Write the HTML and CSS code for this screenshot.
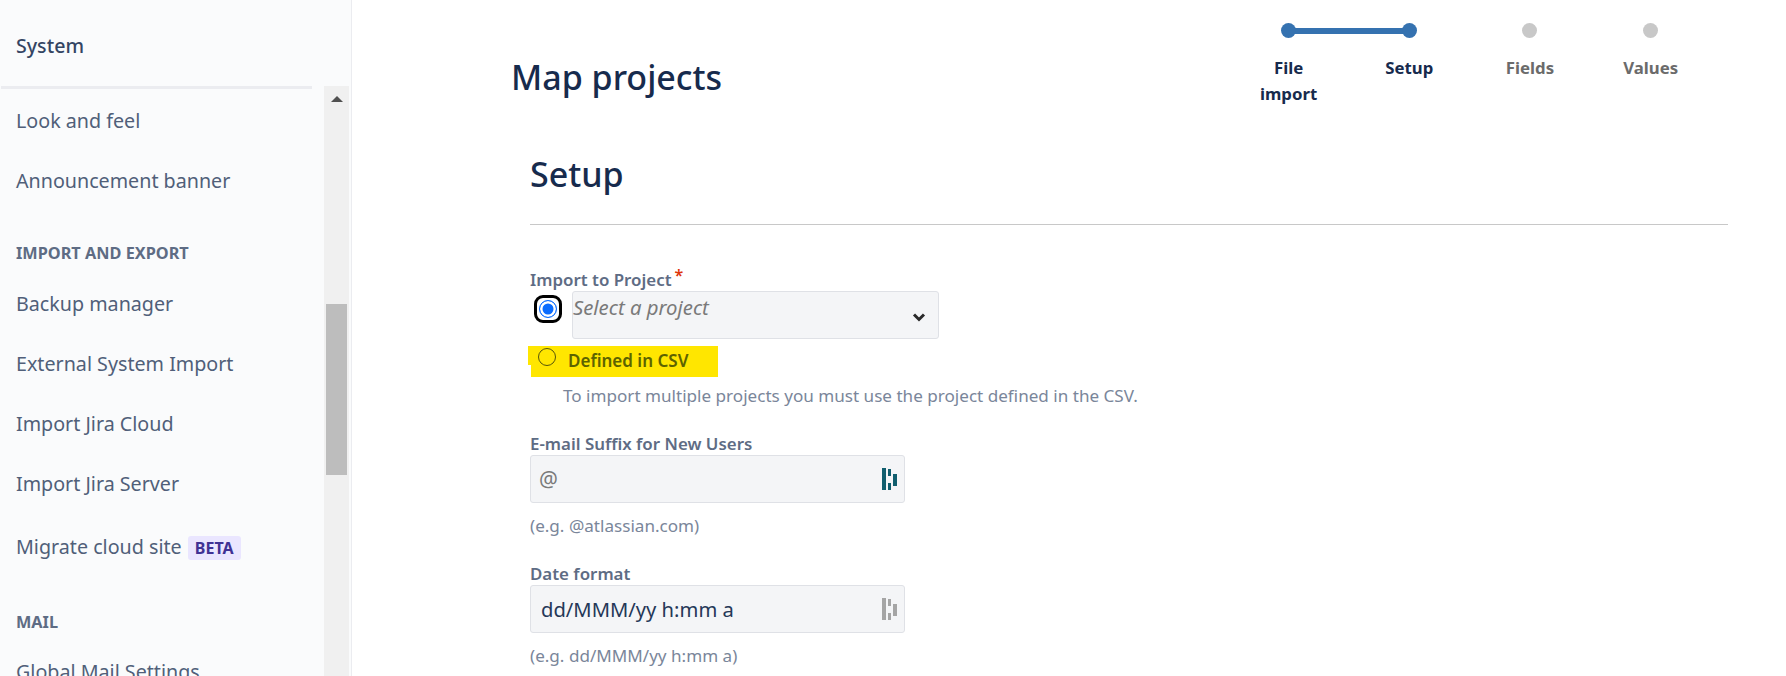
FILE: index.html
```html
<!DOCTYPE html>
<html lang="en">
<head>
<meta charset="utf-8">
<title>Map projects</title>
<link rel="stylesheet" href="styles.css">
</head>
<body>
<div class="app">
  <aside class="sidebar">
    <div class="side-title">System</div>
    <div class="side-body">
      <div class="nav-col">
        <div class="side-rule"></div>
        <nav class="nav">
          <a class="nav-item first">Look and feel</a>
          <a class="nav-item">Announcement banner</a>
          <div class="nav-head">IMPORT AND EXPORT</div>
          <a class="nav-item">Backup manager</a>
          <a class="nav-item">External System Import</a>
          <a class="nav-item">Import Jira Cloud</a>
          <a class="nav-item">Import Jira Server</a>
          <a class="nav-item beta-row">Migrate cloud site <span class="beta">BETA</span></a>
          <div class="nav-head mail">MAIL</div>
          <a class="nav-item">Global Mail Settings</a>
        </nav>
      </div>
      <div class="scrollbar">
        <div class="arrow"></div>
        <div class="thumb"></div>
      </div>
    </div>
  </aside>
  <main class="main">
    <header class="top">
      <h1 class="title">Map projects</h1>
      <ol class="steps">
        <li class="step done first-step"><span class="dot"></span><span class="step-label">File import</span></li>
        <li class="step done"><span class="dot"></span><span class="step-label">Setup</span></li>
        <li class="step"><span class="dot"></span><span class="step-label">Fields</span></li>
        <li class="step"><span class="dot"></span><span class="step-label">Values</span></li>
      </ol>
    </header>
    <section class="form">
      <h2 class="section">Setup</h2>
      <label class="label project-label">Import to Project<span class="star">*</span></label>
      <div class="project-row">
        <span class="radio-focus"><span class="radio-on"></span></span>
        <div class="select">
          <span class="placeholder">Select a project</span>
          <svg class="chev" viewBox="0 0 14 10" width="14" height="10"><path d="M2 2.500 L7 7.500 L12 2.500" fill="none" stroke="#2A2A2A" stroke-width="3"/></svg>
        </div>
      </div>
      <div class="csv-row">
        <span class="radio-off"></span>
        <span class="csv-text">Defined in CSV</span>
      </div>
      <p class="hint indent">To import multiple projects you must use the project defined in the CSV.</p>
      <label class="label email-label">E-mail Suffix for New Users</label>
      <div class="input">
        <span class="at">@</span>
        <svg class="dash" viewBox="0 0 16 22" width="16" height="22"><path fill="#115E6E" d="M0 0h4v22H0zM6 1h3v7H6zM6 15h3v7H6zM11 6h4v12h-4z"/></svg>
      </div>
      <p class="hint eg">(e.g. @atlassian.com)</p>
      <label class="label date-label">Date format</label>
      <div class="input">
        <span class="value">dd/MMM/yy h:mm a</span>
        <svg class="dash" viewBox="0 0 16 22" width="16" height="22"><path fill="#A5A5A5" d="M0 0h4v22H0zM6 1h3v7H6zM6 15h3v7H6zM11 6h4v12h-4z"/></svg>
      </div>
      <p class="hint eg">(e.g. dd/MMM/yy h:mm a)</p>
    </section>
  </main>
</div>
</body>
</html>
```
FILE: styles.css
```css
* { box-sizing: border-box; }
html, body { margin: 0; height: 676px; overflow: hidden; background: #fff; }
body { font-family: "Noto Sans", "Open Sans", sans-serif; color: #172B4D; }
.app { display: flex; height: 676px; overflow: hidden; }

.sidebar { width: 352px; flex: none; background: #FAFBFC; border-right: 1px solid #EBECF0; display: flex; flex-direction: column; }
.side-title { height: 86px; flex: none; padding: 34px 0 0 16px; font-size: 19.600px; line-height: 24px; font-weight: 500; color: #344563; }
.side-body { display: flex; flex: 1; min-height: 0; }
.nav-col { flex: 1; min-width: 0; display: flex; flex-direction: column; }
.side-rule { height: 3px; width: 311px; margin-left: 1px; background: #EBECF0; flex: none; }
.nav { flex: 1; padding-left: 16px; overflow: hidden; color: #505F79; font-size: 19.700px; }
.nav-item { display: block; height: 60px; line-height: 60px; white-space: nowrap; }
.nav-item.first { margin-top: 2px; }
.beta-row { height: 65px; line-height: 66px; }
.beta { display: inline-block; margin-left: 1px; padding: 0 7px; height: 24px; line-height: 24px; border-radius: 3px; background: #EAE6FF; color: #403294; font-size: 16px; font-weight: 700; vertical-align: 0; }
.nav-head { height: 24px; line-height: 24px; margin-top: 30px; margin-bottom: 9px; font-size: 16.300px; font-weight: 700; color: #5E6C84; }
.nav-head.mail { margin-top: 31px; margin-bottom: 8px; }
.scrollbar { width: 25px; flex: none; margin-right: 2px; background: #F0F0F0; padding: 0 2px; }
.arrow { width: 0; height: 0; margin: 10px auto 0; border-left: 6px solid transparent; border-right: 6px solid transparent; border-bottom: 6px solid #505050; }
.thumb { height: 171px; margin-top: 202px; background: #BDBDBD; }

.main { flex: 1; min-width: 0; padding-left: 159px; padding-right: 58px; }
.top { display: flex; justify-content: space-between; height: 110px; }
.title { margin: 56px 0 0; font-size: 34px; line-height: 42px; font-weight: 500; color: #172B4D; }
.steps { list-style: none; margin: 23px 17px 0 0; padding: 0; display: flex; }
.step { width: 120.700px; display: flex; flex-direction: column; align-items: center; color: #6B6B6B; position: relative; }
.dot { width: 15px; height: 15px; border-radius: 50%; background: #C8C8C8; }
.done { color: #172B4D; }
.done .dot { background: #3572B0; z-index: 1; }
.first-step::after { content: ""; position: absolute; top: 4.500px; left: 60px; width: 121px; height: 6px; background: #3572B0; }
.step-label { margin-top: 17px; width: 80px; text-align: center; font-size: 16.800px; line-height: 26px; font-weight: 700; }

.form { margin-left: 19px; }
.section { margin: 0; padding-top: 43px; height: 115px; border-bottom: 1px solid #C8C8C8; font-size: 34px; line-height: 42px; font-weight: 500; color: #172B4D; }
.label { display: block; font-size: 16.900px; line-height: 22px; font-weight: 600; color: #5E6C84; }
.project-label { margin-top: 44px; }
.star { color: #DE350B; font-size: 16px; position: relative; top: -5px; margin-left: 3px; }
.project-row { display: flex; margin-top: 0; }
.radio-focus { width: 28px; height: 28px; margin: 4px 10px 0 4px; border: 3px solid #000; border-radius: 9px; display: flex; align-items: center; justify-content: center; flex: none; }
.radio-on { width: 18px; height: 18px; border-radius: 50%; background: #0A6CFF; border: 1.500px solid #0A6CFF; box-shadow: inset 0 0 0 2.500px #fff; }
.select { width: 367px; height: 48px; background: #F4F5F7; border: 1px solid #DFE1E6; border-radius: 3px; position: relative; }
.placeholder { display: block; font-size: 20.300px; line-height: 30px; font-style: italic; color: #7A7A7A; }
.chev { position: absolute; right: 12px; top: 20px; }
.csv-row { display: flex; width: 190px; height: 31px; margin: 7px 0 0 -2px; background: #FFE600; align-items: center; position: relative; }
.csv-row::after { content: ""; position: absolute; left: 0; bottom: 0; width: 3px; height: 12px; background: #fff; }
.radio-off { width: 18px; height: 18px; margin: -9px 0 0 10px; border: 1.500px solid #55550A; border-radius: 50%; flex: none; }
.csv-text { margin-left: 12px; margin-top: -2px; font-size: 17px; line-height: 22px; font-weight: 600; color: #5C6300; }
.hint { margin: 0; font-size: 17.100px; line-height: 22px; color: #7A869A; }
.indent { margin-top: 8px; padding-left: 33px; }
.email-label { margin-top: 25.500px; }
.date-label { margin-top: 26px; }
.input { width: 375px; height: 48px; margin-top: 0; background: #F4F5F7; border: 1px solid #DFE1E6; border-radius: 3px; display: flex; align-items: center; justify-content: space-between; padding: 0 6px 0 8px; }
.at { font-size: 21px; color: #7A7A7A; }
.value { font-size: 20.200px; padding-left: 2px; color: #253858; }
.eg { margin-top: 12px; }
```
